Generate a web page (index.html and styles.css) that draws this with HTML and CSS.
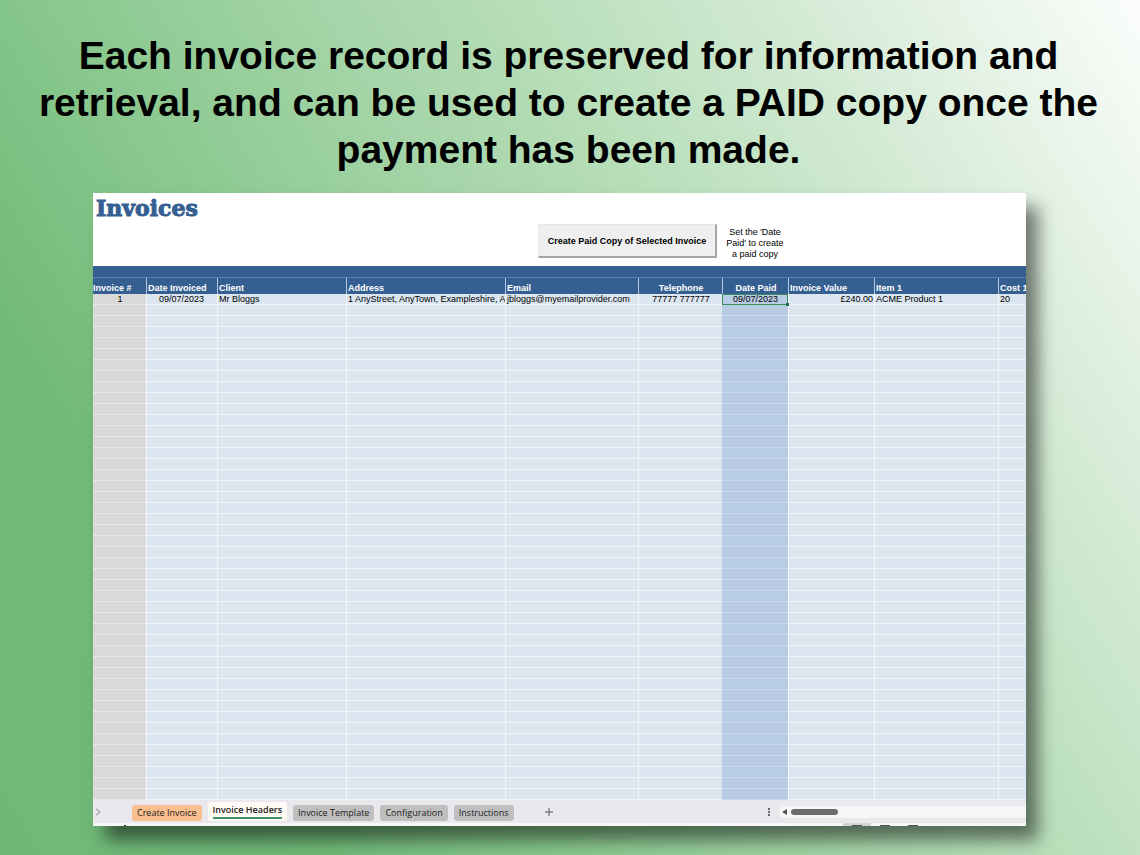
FILE: index.html
```
<!DOCTYPE html>
<html lang="en">
<head>
    <meta charset="UTF-8">
    <meta name="viewport" content="width=device-width, initial-scale=1.0">
    <title>Invoices</title>
    <link rel="stylesheet" href="styles.css">
</head>
<body>
    <h1 class="headline">Each invoice record is preserved for information and retrieval, and can be used to create a PAID copy once the payment has been made.</h1>

    <main class="sheet">
        <div class="top">
            <h2 class="title">Invoices</h2>
            <div class="actions">
                <button type="button" class="paid">Create Paid Copy of Selected Invoice</button>
                <p class="note">Set the 'Date Paid' to create a paid copy</p>
            </div>
        </div>

        <div class="band"></div>

        <table class="grid">
            <colgroup>
                <col class="c-num">
                <col class="c-date">
                <col class="c-client">
                <col class="c-address">
                <col class="c-email">
                <col class="c-phone">
                <col class="c-paid">
                <col class="c-value">
                <col class="c-item">
                <col>
            </colgroup>
            <thead>
                <tr>
                    <th class="first">Invoice #</th>
                    <th>Date Invoiced</th>
                    <th>Client</th>
                    <th>Address</th>
                    <th>Email</th>
                    <th class="center">Telephone</th>
                    <th class="center">Date Paid</th>
                    <th>Invoice Value</th>
                    <th>Item 1</th>
                    <th>Cost 1</th>
                </tr>
            </thead>
            <tbody id="rows">
                <tr>
                    <td class="center">1</td>
                    <td class="date">09/07/2023</td>
                    <td>Mr Bloggs</td>
                    <td>1 AnyStreet, AnyTown, Exampleshire, Al</td>
                    <td>jbloggs@myemailprovider.com</td>
                    <td class="center">77777 777777</td>
                    <td class="center selected">09/07/2023</td>
                    <td class="right">£240.00</td>
                    <td>ACME Product 1</td>
                    <td>20</td>
                </tr>
            </tbody>
        </table>

        <div class="bar">
            <button type="button" class="next" aria-label="Next sheet">
                <svg width="6" height="8" viewBox="0 0 6 8"><path d="M1 1l4 3-4 3" fill="none" stroke="#888" stroke-width="1"/></svg>
            </button>
            <nav class="tabs">
                <a href="#" class="tab orange">Create Invoice</a>
                <a href="#" class="tab active"><span>Invoice Headers</span></a>
                <a href="#" class="tab">Invoice Template</a>
                <a href="#" class="tab">Configuration</a>
                <a href="#" class="tab">Instructions</a>
            </nav>
            <button type="button" class="add" aria-label="New sheet">
                <svg width="8" height="8" viewBox="0 0 8 8"><path d="M4 0v8M0 4h8" stroke="#555" stroke-width="1"/></svg>
            </button>
            <svg class="dots" width="2" height="8" viewBox="0 0 2 8"><path d="M0 0h2v2H0zM0 3h2v2H0zM0 6h2v2H0z" fill="#666"/></svg>
            <div class="scroll">
                <svg width="5" height="6" viewBox="0 0 5 6"><path d="M5 0v6L0 3z" fill="#555"/></svg>
                <div class="thumb"></div>
            </div>
        </div>

        <div class="status">
            <span class="mark"></span>
            <div class="views">
                <span class="view on"></span>
                <span class="view"></span>
                <span class="view"></span>
            </div>
        </div>
    </main>

    <script>
        const rows = document.querySelector('#rows')

        // empty rows under the first record
        for (let i = 0; i < 45; i++){
            const tr = document.createElement('tr')
            for (let c = 0; c < 10; c++){
                tr.appendChild(document.createElement('td'))
            }
            rows.appendChild(tr)
        }
    </script>
</body>
</html>
```
FILE: styles.css
```
*{
    box-sizing: border-box;
}

body{
    margin: 0;
    min-height: 100vh;
    padding: 32px 114px 29px 93px;
    background: linear-gradient(58deg, #6fb877 0%, #72ba79 20%, #86c68b 33%, #a0d2a3 48%, #b9dfbb 64%, #d0e9d1 77%, #eef7ef 93%, #fbfdfb 100%);
    font-family: "Liberation Sans", Arial, Helvetica, sans-serif;
    color: black;
}

.headline{
    margin: 0 -74px 20px -56px;
    font-size: 39px;
    line-height: 47px;
    text-align: center;
}

.sheet{
    background-color: white;
    box-shadow: 12px 14px 16px rgba(0, 0, 0, 0.5);
    overflow: hidden;
}

.top{
    height: 73px;
    padding: 3px;
}

.title{
    margin: 0 0 3px;
    font-family: "DejaVu Serif", serif;
    font-size: 22px;
    line-height: 25px;
    color: #365f91;
    -webkit-text-stroke: 1px #365f91;
}

.actions{
    display: flex;
    gap: 8px;
    margin-left: 442px;
}

.paid{
    width: 179px;
    height: 34px;
    padding: 0;
    background-color: #efefef;
    border: 1px solid #e6e6e6;
    border-right: 2px solid #a5a5a5;
    border-bottom: 2px solid #a5a5a5;
    font-family: inherit;
    font-size: 9px;
    font-weight: bold;
    color: black;
    white-space: nowrap;
}

.note{
    margin: 3px 0 0;
    width: 60px;
    font-size: 9px;
    line-height: 11px;
    text-align: center;
}

.band{
    height: 12px;
    background-color: #365f91;
    border-bottom: 1px solid #5d7fa8;
}

.grid{
    width: 100%;
    table-layout: fixed;
    border-collapse: separate;
    border-spacing: 0;
    font-size: 9px;
}

.c-num{ width: 53px; }
.c-date{ width: 71px; }
.c-client{ width: 129px; }
.c-address{ width: 159px; }
.c-email{ width: 133px; }
.c-phone{ width: 84px; }
.c-paid{ width: 66px; }
.c-value{ width: 86px; }
.c-item{ width: 124px; }

.grid th{
    height: 16px;
    padding: 4px 0 0 1px;
    background-color: #365f91;
    border-left: 1px solid #b8c8dc;
    color: white;
    line-height: 12px;
    text-align: left;
    white-space: nowrap;
    overflow: hidden;
}

.grid .first{
    padding-left: 0;
    border-left: 0;
}

.grid td{
    height: 11px;
    padding: 0 0 0 1px;
    background-color: #dce6f1;
    border-left: 1px solid #f2f6fa;
    border-bottom: 1px solid #f2f6fa;
    line-height: 10px;
    white-space: nowrap;
    overflow: hidden;
}

.grid td:first-child{
    background-color: #d9d9d9;
    border-left: 0;
    border-bottom-color: #e8e8e8;
}

.grid td:nth-child(7){
    background-color: #b8cce4;
    border-left-color: #b8cce4;
    border-bottom-color: #c9d8ea;
}

.grid .center{
    text-align: center;
}

.grid .right{
    padding-right: 1px;
    text-align: right;
}

.grid .date{
    padding-right: 13px;
    text-align: right;
}

.grid td.selected{
    position: relative;
    border: 1px solid #3c8c5c;
    line-height: 9px;
    overflow: visible;
}

/* fill handle */
.selected::after{
    content: "";
    position: absolute;
    right: -2px;
    bottom: -2px;
    width: 3px;
    height: 3px;
    background-color: #217346;
}

.bar{
    display: flex;
    align-items: center;
    height: 23px;
    background-color: #e9e8ed;
}

.next, .add{
    display: flex;
    padding: 0;
    border: 0;
    background: none;
}

.next{
    margin: 0 31px 0 2px;
}

.tabs{
    display: flex;
    align-items: flex-end;
    gap: 6px;
}

.tab{
    height: 16px;
    padding: 0 5px;
    border-radius: 3px;
    background-color: #bfbfbf;
    color: #222;
    font-family: "Open Sans", "Noto Sans", sans-serif;
    font-size: 9px;
    line-height: 16px;
    text-decoration: none;
    white-space: nowrap;
}

.orange{
    background-color: #fabf8f;
}

.active{
    height: 19px;
    background-color: #fffaf5;
    font-weight: 600;
}

.active span{
    display: block;
    height: 17px;
    border-bottom: 2px solid #3f9560;
}

.add{
    margin-left: 31px;
}

.dots{
    margin-left: auto;
}

.scroll{
    display: flex;
    align-items: center;
    gap: 4px;
    width: 247px;
    height: 12px;
    margin-left: 9px;
    padding-left: 3px;
    border-radius: 6px 0 0 6px;
    background-color: #f6f6f6;
}

.thumb{
    width: 47px;
    height: 6px;
    border-radius: 3px;
    background-color: #6b6b6b;
}

/* top edge of the status bar */
.status{
    display: flex;
    justify-content: space-between;
    height: 3px;
    background-color: #f7f7f7;
    padding: 0 99px 0 31px;
}

.mark{
    width: 2px;
    height: 1px;
    margin-top: 2px;
    background-color: #333;
}

.views{
    display: flex;
}

.view{
    width: 28px;
    height: 3px;
    padding: 2px 9px 0;
}

.view::after{
    content: "";
    display: block;
    height: 1px;
    background-color: #555;
}

.on{
    background-color: #d4d4d4;
}
```
